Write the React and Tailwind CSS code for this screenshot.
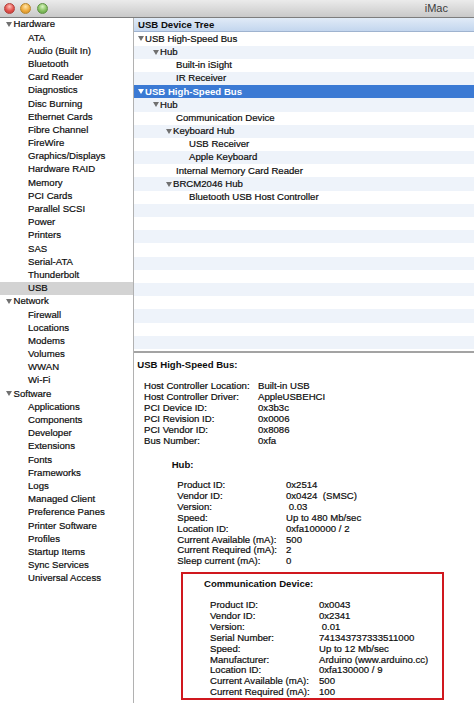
import clsx from 'clsx';

const sidebar = [
  { label: 'Hardware', group: true },
  { label: 'ATA' },
  { label: 'Audio (Built In)' },
  { label: 'Bluetooth' },
  { label: 'Card Reader' },
  { label: 'Diagnostics' },
  { label: 'Disc Burning' },
  { label: 'Ethernet Cards' },
  { label: 'Fibre Channel' },
  { label: 'FireWire' },
  { label: 'Graphics/Displays' },
  { label: 'Hardware RAID' },
  { label: 'Memory' },
  { label: 'PCI Cards' },
  { label: 'Parallel SCSI' },
  { label: 'Power' },
  { label: 'Printers' },
  { label: 'SAS' },
  { label: 'Serial-ATA' },
  { label: 'Thunderbolt' },
  { label: 'USB', selected: true },
  { label: 'Network', group: true },
  { label: 'Firewall' },
  { label: 'Locations' },
  { label: 'Modems' },
  { label: 'Volumes' },
  { label: 'WWAN' },
  { label: 'Wi-Fi' },
  { label: 'Software', group: true },
  { label: 'Applications' },
  { label: 'Components' },
  { label: 'Developer' },
  { label: 'Extensions' },
  { label: 'Fonts' },
  { label: 'Frameworks' },
  { label: 'Logs' },
  { label: 'Managed Client' },
  { label: 'Preference Panes' },
  { label: 'Printer Software' },
  { label: 'Profiles' },
  { label: 'Startup Items' },
  { label: 'Sync Services' },
  { label: 'Universal Access' },
];

const tree = [
  { label: 'USB High-Speed Bus', tri: true, indent: 'pl-[4px]' },
  { label: 'Hub', tri: true, indent: 'pl-[19px]' },
  { label: 'Built-in iSight', indent: 'pl-[42px]' },
  { label: 'IR Receiver', indent: 'pl-[42px]' },
  { label: 'USB High-Speed Bus', tri: true, indent: 'pl-[4px]', selected: true },
  { label: 'Hub', tri: true, indent: 'pl-[19px]' },
  { label: 'Communication Device', indent: 'pl-[42px]' },
  { label: 'Keyboard Hub', tri: true, indent: 'pl-[32px]' },
  { label: 'USB Receiver', indent: 'pl-[55px]' },
  { label: 'Apple Keyboard', indent: 'pl-[55px]' },
  { label: 'Internal Memory Card Reader', indent: 'pl-[42px]' },
  { label: 'BRCM2046 Hub', tri: true, indent: 'pl-[32px]' },
  { label: 'Bluetooth USB Host Controller', indent: 'pl-[55px]' },
  ...Array.from({ length: 13 }, () => ({ label: '', indent: '' })),
];

const busProps = [
  ['Host Controller Location:', 'Built-in USB'],
  ['Host Controller Driver:', 'AppleUSBEHCI'],
  ['PCI Device ID:', '0x3b3c'],
  ['PCI Revision ID:', '0x0006'],
  ['PCI Vendor ID:', '0x8086'],
  ['Bus Number:', '0xfa'],
];

const hubProps = [
  ['Product ID:', '0x2514'],
  ['Vendor ID:', '0x0424  (SMSC)'],
  ['Version:', ' 0.03'],
  ['Speed:', 'Up to 480 Mb/sec'],
  ['Location ID:', '0xfa100000 / 2'],
  ['Current Available (mA):', '500'],
  ['Current Required (mA):', '2'],
  ['Sleep current (mA):', '0'],
];

const deviceProps = [
  ['Product ID:', '0x0043'],
  ['Vendor ID:', '0x2341'],
  ['Version:', ' 0.01'],
  ['Serial Number:', '741343737333511000'],
  ['Speed:', 'Up to 12 Mb/sec'],
  ['Manufacturer:', 'Arduino (www.arduino.cc)'],
  ['Location ID:', '0xfa130000 / 9'],
  ['Current Available (mA):', '500'],
  ['Current Required (mA):', '100'],
];

function Tri({ white }) {
  return (
    <svg width="6" height="5" viewBox="0 0 6 5" className="shrink-0">
      <path d="M0 0H6L3 5Z" fill={white ? '#ffffff' : '#707070'} />
    </svg>
  );
}

function Light({ color }) {
  return <div className={clsx('h-[11px] w-[11px] rounded-full border', color)} />;
}

function Props({ rows, labelWidth }) {
  return (
    <div>
      {rows.map(([label, value]) => (
        <div key={label} className="flex h-[10.85px] items-center whitespace-pre">
          <span className={clsx('shrink-0', labelWidth)}>{label}</span>
          <span>{value}</span>
        </div>
      ))}
    </div>
  );
}

export default function App() {
  return (
    <div className="flex h-[703px] w-[474px] flex-col overflow-hidden bg-white font-['Liberation_Sans',Arial,sans-serif] text-[9.6px] text-[#0d0d0d] [-webkit-text-stroke:0.2px]">
      <div className="flex h-[18px] shrink-0 items-center border-b border-[#7d7d7d] bg-gradient-to-b from-[#ebebeb] to-[#c9c9c9] pl-[3.5px]">
        <div className="flex gap-[5.6px]">
          <Light color="border-[#b1413d] bg-[radial-gradient(circle_at_50%_30%,#ffc0b8,#e2524c_55%,#c03a35)]" />
          <Light color="border-[#b7862c] bg-[radial-gradient(circle_at_50%_30%,#ffe6a8,#eeaa3c_55%,#cf8a22)]" />
          <Light color="border-[#5f9144] bg-[radial-gradient(circle_at_50%_30%,#d9f5c0,#86c061_55%,#5e9d3f)]" />
        </div>
        <span className="ml-auto mr-[26px] text-[11px] text-[#3c3c3c] [-webkit-text-stroke:0px]">iMac</span>
      </div>

      <div className="flex min-h-0 flex-1">
        <div className="w-[134px] shrink-0 border-r border-[#b1b1b1] bg-white">
          {sidebar.map((item) => (
            <div
              key={item.label}
              className={clsx(
                'flex h-[13.2px] items-center whitespace-nowrap',
                item.group ? 'gap-[1.5px] pl-[6px]' : 'pl-[28px]',
                item.selected && 'bg-[#d3d3d3]',
              )}
            >
              {item.group && <Tri />}
              <span>{item.label}</span>
            </div>
          ))}
        </div>

        <div className="flex min-w-0 flex-1 flex-col">
          <div className="h-[333px] shrink-0 overflow-hidden">
            <div className="flex h-[14.4px] items-center border-b border-[#9fb3cf] bg-gradient-to-b from-[#e1ebf7] to-[#c3d6ee] pl-[4px] font-bold [-webkit-text-stroke:0px]">
              USB Device Tree
            </div>
            {tree.map((row, i) => (
              <div
                key={i}
                className={clsx(
                  'flex h-[13.2px] items-center gap-px whitespace-nowrap',
                  row.indent,
                  row.selected ? 'bg-[#3b7ad4] font-bold text-white [-webkit-text-stroke:0px]' : i % 2 ? 'bg-[#eef3fa]' : 'bg-white',
                )}
              >
                {row.tri && <Tri white={row.selected} />}
                <span>{row.label}</span>
              </div>
            ))}
          </div>

          <div className="h-[2px] shrink-0 bg-[#a3a3a3]" />

          <div className="min-h-0 flex-1 overflow-hidden pt-[6.6px] leading-[10.85px]">
            <div className="pl-[3.3px] font-bold [-webkit-text-stroke:0px]">USB High-Speed Bus:</div>
            <div className="mt-[10.85px] pl-[10px]">
              <Props rows={busProps} labelWidth="w-[114px]" />
            </div>

            <div className="mt-[13.4px] pl-[37.7px] font-bold [-webkit-text-stroke:0px]">Hub:</div>
            <div className="mt-[9.85px] pl-[43.3px]">
              <Props rows={hubProps} labelWidth="w-[108.7px]" />
            </div>

            <div className="ml-[46.7px] mt-[4.6px] w-[263.3px] border-2 border-[#d0181e] pl-[21.3px] pt-[5.2px]">
              <div className="font-bold [-webkit-text-stroke:0px]">Communication Device:</div>
              <div className="mt-[10.6px] pl-[6px]">
                <Props rows={deviceProps} labelWidth="w-[109px]" />
              </div>
            </div>
          </div>
        </div>
      </div>
    </div>
  );
}
